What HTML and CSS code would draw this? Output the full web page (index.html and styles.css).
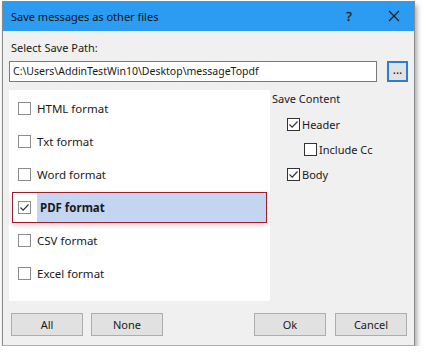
FILE: index.html
```html
<!DOCTYPE html>
<html>
<head>
<meta charset="utf-8">
<link rel="stylesheet" href="styles.css">
</head>
<body>
<div class="window">
  <div class="titlebar">
    <span class="title">Save messages as other files</span>
    <span class="help">?</span>
    <svg class="close" width="12" height="12" viewBox="0 0 12 12"><path d="M1 1 L11 11 M11 1 L1 11" stroke="#1a1a1a" stroke-width="1.2" fill="none"/></svg>
  </div>
  <div class="content">
    <div class="label">Select Save Path:</div>
    <div class="pathrow">
      <div class="input">C:\Users\AddinTestWin10\Desktop\messageTopdf</div>
      <div class="browse">...</div>
    </div>
    <div class="main">
      <div class="list">
        <div class="item"><span class="box"></span><span class="text">HTML format</span></div>
        <div class="item"><span class="box"></span><span class="text">Txt format</span></div>
        <div class="item"><span class="box"></span><span class="text">Word format</span></div>
        <div class="item selected"><span class="box checked"><svg width="11" height="11" viewBox="0 0 11 11"><path d="M1.5 5.5 L4.2 8.2 L9.5 2.5" stroke="#333" stroke-width="1.2" fill="none"/></svg></span><span class="text">PDF format</span></div>
        <div class="item"><span class="box"></span><span class="text">CSV format</span></div>
        <div class="item"><span class="box"></span><span class="text">Excel format</span></div>
      </div>
      <div class="side">
        <div class="sidetitle">Save Content</div>
        <div class="opt o1"><span class="cb"><svg width="11" height="11" viewBox="0 0 11 11"><path d="M1.5 5.5 L4.2 8.2 L9.5 2.5" stroke="#333" stroke-width="1.2" fill="none"/></svg></span>Header</div>
        <div class="opt o2"><span class="cb"></span>Include Cc</div>
        <div class="opt o3"><span class="cb"><svg width="11" height="11" viewBox="0 0 11 11"><path d="M1.5 5.5 L4.2 8.2 L9.5 2.5" stroke="#333" stroke-width="1.2" fill="none"/></svg></span>Body</div>
      </div>
    </div>
    <div class="buttons">
      <div class="btn">All</div>
      <div class="btn">None</div>
      <div class="spacer"></div>
      <div class="btn ok">Ok</div>
      <div class="btn cancel">Cancel</div>
    </div>
  </div>
</div>
</body>
</html>
```

FILE: styles.css
```css
* { box-sizing: border-box; }
html, body { margin: 0; padding: 0; background: #fff; }
body {
  font-family: "Noto Sans", "Open Sans", sans-serif;
  font-size: 11px;
  color: #1a1a1a;
}
.window {
  margin: 1px 0 0 2px;
  width: 413px;
  height: 345px;
  background: #f0f0f0;
  border: 1px solid #8a8a8a;
  border-top: none;
  border-bottom: 1px solid #6cc0ee;
  box-shadow: 2px 4px 5px rgba(0,0,0,0.35);
  display: flex;
  flex-direction: column;
}
.titlebar {
  height: 30px;
  background: #2b9cf2;
  display: flex;
  align-items: center;
  padding-left: 8px;
  flex: none;
}
.title { font-size: 11px; color: #111; flex: 1; }
.help { font-size: 13px; color: #222; margin-right: 36px; -webkit-text-stroke: 0.3px #222; }
.close { margin-right: 14px; }
.content {
  flex: 1;
  display: flex;
  flex-direction: column;
  padding: 0 6px 0 6px;
}
.label { margin-top: 9px; height: 16px; line-height: 16px; padding-left: 2px; }
.pathrow { display: flex; margin-top: 5px; align-items: center; }
.input {
  width: 368px;
  height: 21px;
  background: #fff;
  border: 1px solid #7a7a7a;
  line-height: 19px;
  padding-left: 3px;
  font-size: 10.5px;
  white-space: nowrap;
  overflow: hidden;
}
.browse {
  margin-left: 10px;
  width: 21px;
  height: 21px;
  border: 2px solid #2a7fd0;
  background: #e2e2e2;
  text-align: center;
  line-height: 14px;
  font-size: 12px;
}
.main { display: flex; margin-top: 8px; }
.list {
  width: 261px;
  height: 211px;
  background: #fff;
  padding-top: 2px;
}
.item {
  height: 33px;
  display: flex;
  align-items: center;
  margin: 0 3px;
}
.box {
  width: 13px;
  height: 13px;
  border: 1px solid #8c8c8c;
  background: #fff;
  margin-left: 6px;
  margin-right: 6px;
  display: flex;
  align-items: center;
  justify-content: center;
}
.text { font-size: 11.5px; }
.item.selected {
  height: 31px;
  margin: 1px 3px;
  border: 1px solid #9c1d2c;
  box-shadow: 0 2px 5px rgba(0,0,0,0.2);
}
.item.selected .box { margin-left: 5px; margin-right: 6px; }
.item.selected .text {
  flex: 1;
  align-self: stretch;
  background: #c3d5f1;
  font-weight: bold;
  display: flex;
  align-items: center;
  padding-left: 3px;
  margin: 0;
}
.side { padding-left: 2px; padding-top: 1px; }
.sidetitle { height: 16px; line-height: 16px; }
.opt { display: flex; align-items: center; height: 13px; margin-left: 15px; }
.o1 { margin-top: 11px; }
.o2 { margin-top: 12px; margin-left: 32px; }
.o3 { margin-top: 12px; }
.cb {
  width: 13px;
  height: 13px;
  border: 1px solid #333;
  background: #fff;
  margin-right: 2px;
  display: flex;
  align-items: center;
  justify-content: center;
}
.buttons { display: flex; margin-top: 12px; padding-left: 2px; }
.btn {
  width: 72px;
  height: 23px;
  border: 1px solid #adadad;
  background: #e1e1e1;
  text-align: center;
  line-height: 21px;
  margin-right: 8px;
}
.ok { margin-right: 9px; }
.cancel { margin-right: 1px; }
.spacer { flex: 1; }
```
